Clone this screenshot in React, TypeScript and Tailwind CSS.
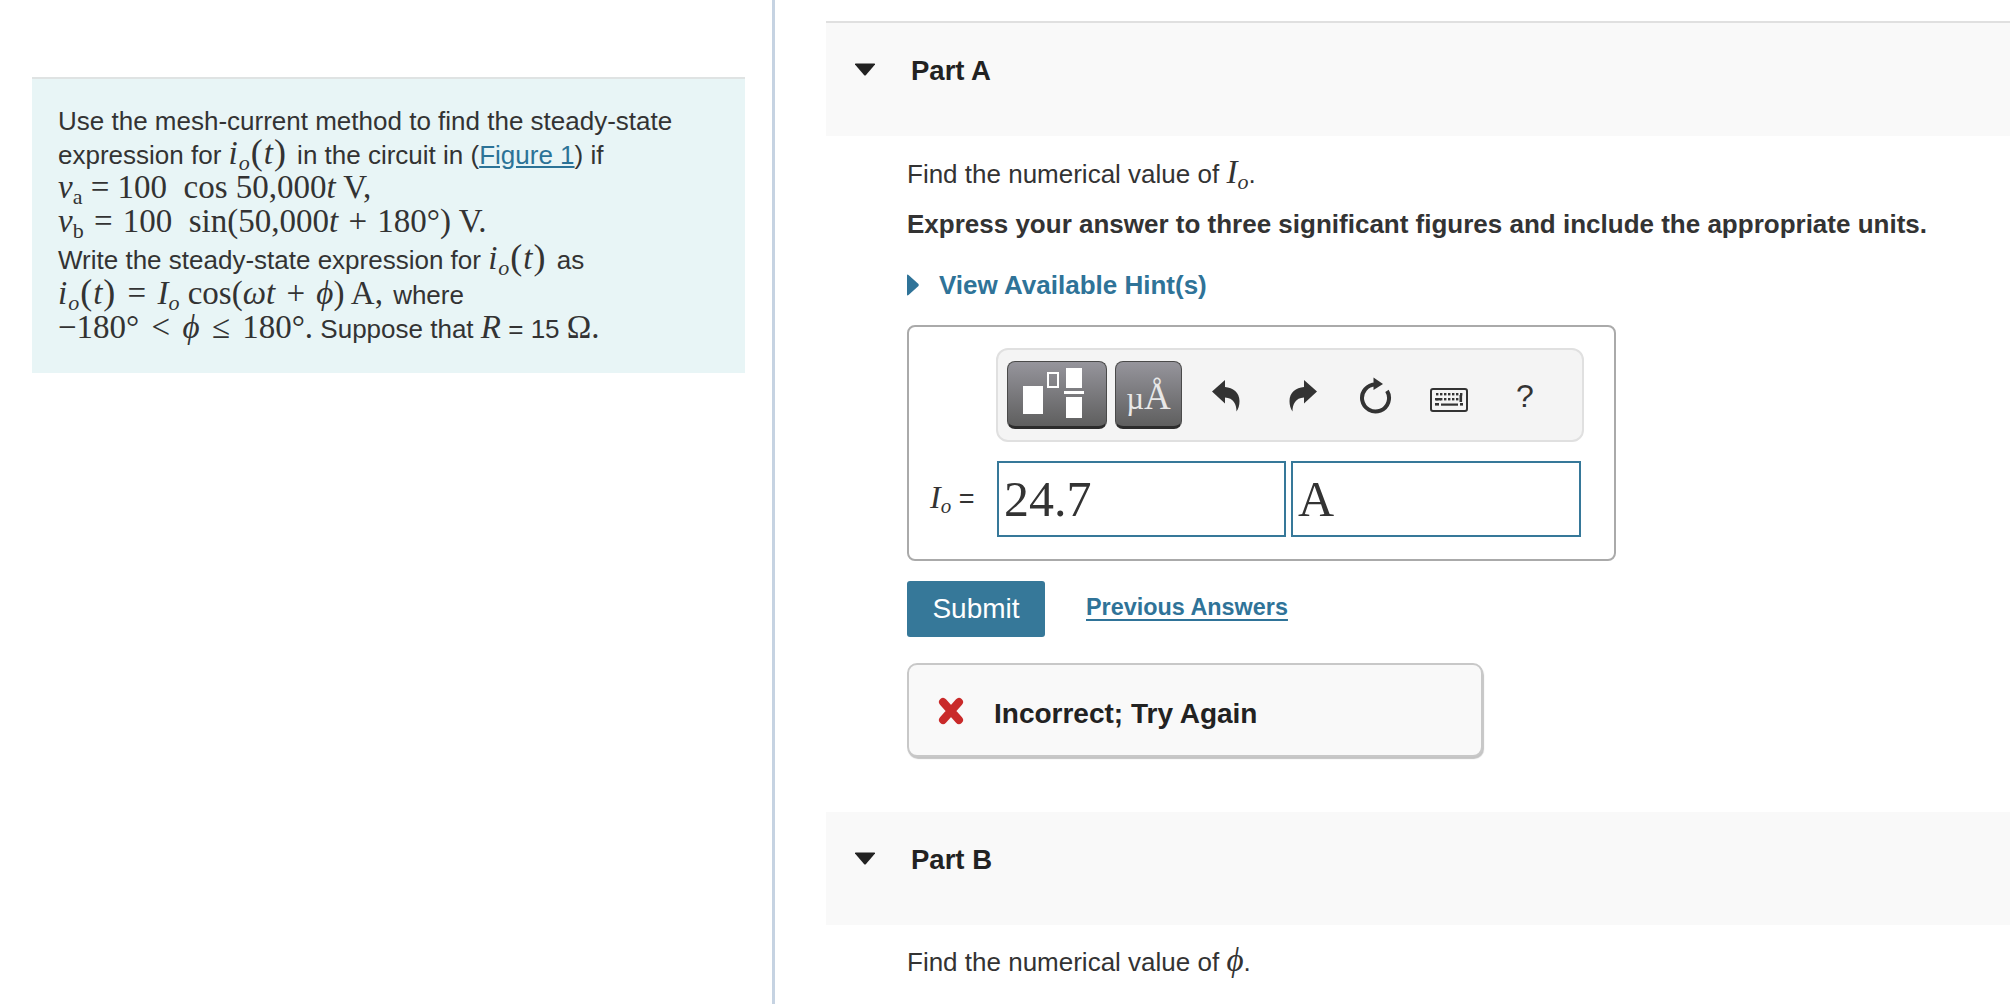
import React from "react";

const Mr = ({ children }: { children: React.ReactNode }) => (
  <span className="font-['Liberation_Serif',serif] text-[33px]">{children}</span>
);
const Op = ({ m, children }: { m: string; children: React.ReactNode }) => <span className={m}>{children}</span>;
const Io = () => (
  <span className="font-['Liberation_Serif',serif] text-[33px] tracking-[1px]">
    <i>i</i>
    <sub className="text-[22px] italic">o</sub>
    <span className="text-[36px]">(</span>
    <i>t</i>
    <span className="text-[36px]">)</span>
  </span>
);

const Tri = ({ color = "#222" }: { color?: string }) => (
  <svg width="22" height="13" viewBox="0 0 22 13" className="shrink-0">
    <path d="M1 1.5Q0.5 0.5 2 0.5H20Q21.5 0.5 21 1.5L12 12Q11 13 10 12Z" fill={color} />
  </svg>
);

const PartHeader = ({ title, h }: { title: string; h: string }) => (
  <div className={`flex items-start bg-[#f9f9f9] pl-[28px] ${h}`}>
    <div className="mt-[40px]">
      <Tri />
    </div>
    <div className="ml-[35px] mt-[31px] text-[27.5px] leading-[34px] font-bold text-[#222]">{title}</div>
  </div>
);

const Undo = ({ flip }: { flip?: boolean }) => (
  <svg width="28" height="32" viewBox="0 0 28 32" className={flip ? "-scale-x-100" : ""}>
    <path
      d="M0 11.5L13 0V7C21 7.5 27.5 12.5 27.5 21C27.5 25 26.5 28.5 24.5 31.5C24.5 24 21.5 18 13 17.5V23.5Z"
      fill="#333"
    />
  </svg>
);

const Reload = () => (
  <svg width="34" height="37" viewBox="0 0 34 37">
    <path d="M16.5 7.5A13.5 13.5 0 1 0 28 13.9" fill="none" stroke="#333" strokeWidth="4" />
    <path d="M14.5 0.5L24 7L14.5 13Z" fill="#333" />
  </svg>
);

const Keyboard = () => {
  const top = [6, 10, 14, 18, 22, 26, 30];
  return (
    <svg width="38" height="24" viewBox="0 0 38 24">
      <rect x="1" y="1" width="36" height="22" rx="2" fill="#f4f4f4" stroke="#333" strokeWidth="2" />
      {top.map((x) => (
        <rect key={x} x={x} y="5" width="2.4" height="2.4" fill="#333" />
      ))}
      {top.slice(0, 6).map((x) => (
        <rect key={x} x={x} y="10" width="2.4" height="2.4" fill="#333" />
      ))}
      <rect x="5" y="10" width="6" height="2.4" fill="#333" />
      <rect x="29.5" y="7" width="2.6" height="7" fill="#333" />
      <rect x="5" y="15" width="4" height="2.6" fill="#333" />
      <rect x="11" y="15.5" width="17" height="2.2" fill="#333" />
      <rect x="30" y="15" width="3" height="2.6" fill="#333" />
    </svg>
  );
};

const Cross = () => (
  <svg width="28" height="28" viewBox="0 0 28 28">
    <path d="M6 5L22 23M22 5L6 23" fill="none" stroke="#c92a2a" strokeWidth="8" strokeLinecap="round" />
  </svg>
);

const TemplateGlyph = () => (
  <svg width="62" height="52" viewBox="0 0 62 52" className="mr-[6px]">
    <rect x="0" y="18" width="20" height="28" fill="#fff" />
    <rect x="25" y="5" width="10" height="14" fill="none" stroke="#fff" strokeWidth="2" />
    <rect x="43" y="0" width="16" height="20" fill="#fff" />
    <rect x="41" y="23" width="20" height="3" fill="#fff" />
    <rect x="43" y="29" width="16" height="21" fill="#fff" />
  </svg>
);

const ToolBtn = ({ w, children }: { w: string; children: React.ReactNode }) => (
  <div
    className={`flex h-[68px] items-center justify-center rounded-[8px] border border-[#4a4a4a] border-b-[3px] border-b-[#2c2c2c] bg-gradient-to-b from-[#96959c] to-[#5f5f5f] ${w}`}
  >
    {children}
  </div>
);

export default function App() {
  return (
    <div className="flex h-[1004px] w-[2010px] overflow-hidden bg-white font-['Liberation_Sans',Arial,sans-serif] text-[26px] text-[#333]">
      {/* Left column */}
      <div className="h-full w-[775px] shrink-0 border-r-[3px] border-[#c6d3e2] pl-[32px] pt-[77px]">
        <div className="h-[296px] w-[713px] border-t-2 border-[#dfe3e3] bg-[#e8f5f6] pl-[26px] pt-[26px] text-[26px]">
          <div className="h-[31px] leading-[33px] whitespace-nowrap">
            Use the mesh-current method to find the steady-state
          </div>
          <div className="h-[34px] leading-[33px] whitespace-nowrap">
            expression for <Io /> <span className="ml-[3px]">in the circuit in (</span>
            <span className="text-[#2b7397] underline">Figure 1</span>) if
          </div>
          <div className="h-[33px] leading-[34px] whitespace-nowrap">
            <Mr>
              <i>v</i>
              <sub className="text-[22px]">a</sub> = 100 &nbsp;cos 50,000<i>t</i> V,
            </Mr>
          </div>
          <div className="h-[36px] leading-[36px] whitespace-nowrap">
            <Mr>
              <i>v</i>
              <sub className="text-[22px]">b</sub> <Op m="mx-[2px]">=</Op> 100 &nbsp;sin(50,000<i>t</i>{" "}
              <Op m="mx-[2px]">+</Op> 180°) V.
            </Mr>
          </div>
          <div className="h-[36px] leading-[36px] whitespace-nowrap">
            Write the steady-state expression for <Io /> <span className="ml-[3px]">as</span>
          </div>
          <div className="h-[35px] leading-[35px] whitespace-nowrap">
            <Io />
            <Mr>
              {" "}
              <Op m="mx-[3px]">=</Op> <i>I</i>
              <sub className="text-[22px] italic">o</sub> cos(<i>ωt</i> <Op m="mx-[3px]">+</Op> <i>ϕ</i>) A,
            </Mr>{" "}
            <span className="ml-[3px]">where</span>
          </div>
          <div className="h-[35px] leading-[35px] whitespace-nowrap">
            <Mr>
              −180° <Op m="mx-[4px]">&lt;</Op> <i>ϕ</i> <Op m="mx-[4px]">≤</Op> 180°.
            </Mr>{" "}
            Suppose that{" "}
            <Mr>
              <i>R</i>
            </Mr>{" "}
            = 15 <Mr>Ω.</Mr>
          </div>
        </div>
      </div>

      {/* Right column */}
      <div className="min-w-0 flex-1 pl-[51px] pt-[21px]">
        <div className="border-t-2 border-[#e0e0e0]">
          <PartHeader title="Part A" h="h-[113px]" />
        </div>
        <div className="pl-[81px]">
          <div className="mt-[19px] h-[34px] leading-[34px]">
            Find the numerical value of{" "}
            <span className="font-['Liberation_Serif',serif] text-[33px]">
              <i>I</i>
              <sub className="text-[22px] italic">o</sub>
            </span>
            .
          </div>
          <div className="mt-[18px] h-[34px] leading-[34px] font-bold">
            Express your answer to three significant figures and include the appropriate units.
          </div>
          <div className="mt-[27px] flex h-[34px] items-center">
            <svg width="12" height="22" viewBox="0 0 12 22" className="shrink-0">
              <path d="M0 1.5Q0 0 1.5 1L11.5 10Q12 11 11.5 12L1.5 21Q0 22 0 20.5Z" fill="#2f7398" />
            </svg>
            <span className="ml-[20px] font-bold text-[#2f7398]">View Available Hint(s)</span>
          </div>

          {/* Answer box */}
          <div className="mt-[23px] h-[236px] w-[709px] rounded-[8px] border-2 border-[#aaaaaa] pl-[87px] pt-[21px]">
            <div className="flex h-[94px] w-[588px] items-center rounded-[12px] border-2 border-[#e0e0e0] bg-[#f4f4f4] pl-[9px]">
              <ToolBtn w="w-[100px]">
                <TemplateGlyph />
              </ToolBtn>
              <div className="ml-[8px]">
                <ToolBtn w="w-[67px]">
                  <span className="mt-[6px] font-['Liberation_Serif',serif] text-[37px] leading-[37px] text-[#e8e8e8]">
                    <span className="text-[31px]">µ</span>Å
                  </span>
                </ToolBtn>
              </div>
              <div className="ml-[30px] mt-[1px]">
                <Undo />
              </div>
              <div className="ml-[49px] mt-[1px]">
                <Undo flip />
              </div>
              <div className="ml-[42px]">
                <Reload />
              </div>
              <div className="ml-[37px] mt-[10px]">
                <Keyboard />
              </div>
              <div className="ml-[48px] mt-[2px] text-[32px] leading-[40px] text-[#333]">?</div>
            </div>

            <div className="relative ml-[1px] mt-[19px] flex h-[76px] gap-[5px]">
              <div className="absolute left-[-67px] top-[21px] text-[27px] leading-[30px] whitespace-nowrap">
                <span className="font-['Liberation_Serif',serif] text-[32px]">
                  <i>I</i>
                  <sub className="text-[21px] italic">o</sub>
                </span>{" "}
                =
              </div>
              <div className="flex h-[76px] w-[289px] items-center border-2 border-[#367899] pl-[5px] font-['Liberation_Serif',serif] text-[50px] leading-[60px] text-[#333]">
                24.7
              </div>
              <div className="flex h-[76px] w-[290px] items-center border-2 border-[#367899] pl-[5px] font-['Liberation_Serif',serif] text-[50px] leading-[60px] text-[#333]">
                A
              </div>
            </div>
          </div>

          {/* Submit */}
          <div className="mt-[20px] flex h-[56px] items-center">
            <div className="flex h-[56px] w-[138px] items-center justify-center rounded-[3px] bg-[#367899] text-[28px] text-white">
              Submit
            </div>
            <span className="ml-[41px] -mt-[2px] text-[23.4px] font-bold text-[#2f7398] underline underline-offset-4">
              Previous Answers
            </span>
          </div>

          {/* Feedback */}
          <div className="mt-[26px] flex h-[94px] w-[576px] items-center rounded-[10px] border-2 border-[#c8c8c8] bg-[#f9f9f9] pl-[28px] shadow-[1px_2px_1px_#c4c4c4]">
            <div className="mt-[2px]">
              <Cross />
            </div>
            <span className="ml-[29px] mt-[8px] text-[28px] font-bold text-[#222]">Incorrect; Try Again</span>
          </div>
        </div>

        <div className="mt-[55px]">
          <PartHeader title="Part B" h="h-[113px]" />
        </div>
        <div className="pl-[81px]">
          <div className="mt-[18px] h-[34px] leading-[34px]">
            Find the numerical value of{" "}
            <span className="font-['Liberation_Serif',serif] text-[33px] italic">ϕ</span>.
          </div>
        </div>
      </div>
    </div>
  );
}
